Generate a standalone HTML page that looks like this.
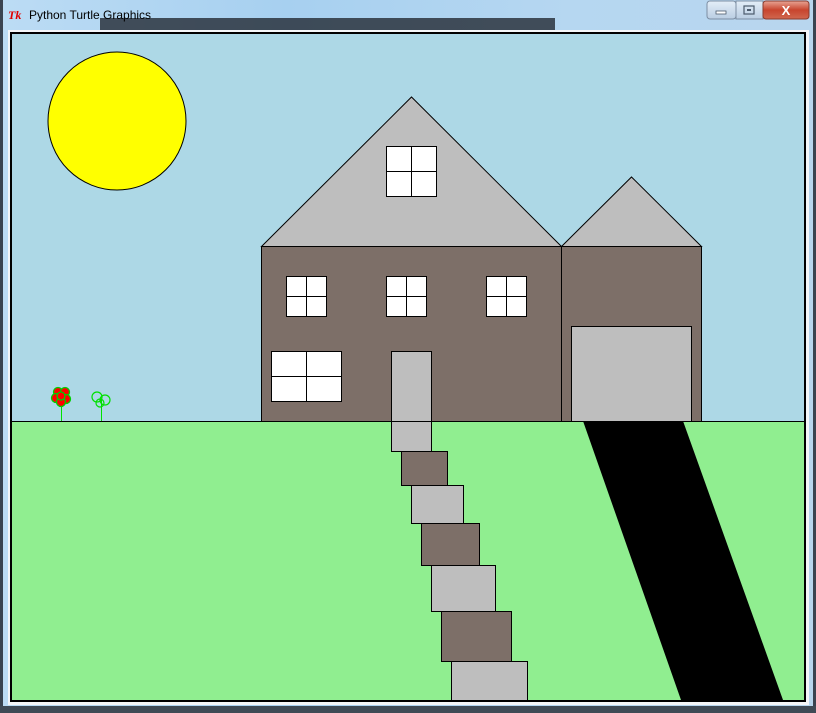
<!DOCTYPE html>
<html><head><meta charset="utf-8"><style>
html,body{margin:0;padding:0;width:816px;height:713px;overflow:hidden;background:#a9cbe6}
svg{display:block}
</style></head><body>
<svg width="816" height="713" xmlns="http://www.w3.org/2000/svg" font-family="Liberation Sans, sans-serif">
<defs>
<linearGradient id="tb" x1="0" y1="0" x2="1" y2="0">
<stop offset="0" stop-color="#bcdcf4"/><stop offset="0.35" stop-color="#a7d0f0"/><stop offset="0.7" stop-color="#b6d7f1"/><stop offset="1" stop-color="#b8d6ee"/>
</linearGradient>
<linearGradient id="cl" x1="0" y1="0" x2="0" y2="1">
<stop offset="0" stop-color="#e8a595"/><stop offset="0.5" stop-color="#c8452e"/><stop offset="1" stop-color="#d0674f"/>
</linearGradient>
<linearGradient id="bt" x1="0" y1="0" x2="0" y2="1">
<stop offset="0" stop-color="#e4eef8"/><stop offset="1" stop-color="#b9cde2"/>
</linearGradient>
<clipPath id="cv"><rect x="12" y="34" width="792" height="666"/></clipPath>
</defs>
<rect x="0" y="0" width="816" height="713" fill="url(#tb)"/>
<rect x="100" y="18" width="455" height="12" fill="#1a1e26" opacity="0.75"/>
<rect x="0" y="0" width="3" height="713" fill="#3a4450"/>
<rect x="813" y="0" width="3" height="713" fill="#3a4450"/>
<rect x="0" y="706" width="816" height="7" fill="#3f4a55"/>
<text x="8" y="19" font-size="12" font-style="italic" font-weight="bold" fill="#e00000" font-family="Liberation Serif, serif">Tk</text>
<text x="29" y="19" font-size="12" fill="#000">Python Turtle Graphics</text>
<rect x="707" y="1" width="29" height="18" rx="3" fill="url(#bt)" stroke="#7d8ea3"/>
<rect x="736" y="1" width="27" height="18" fill="url(#bt)" stroke="#7d8ea3"/>
<rect x="763" y="1" width="46" height="18" rx="3" fill="url(#cl)" stroke="#8a3b2e"/>
<rect x="716" y="11" width="10" height="3" fill="#fff" stroke="#4b5a6c" stroke-width="0.8"/>
<rect x="744" y="6" width="10" height="8" fill="none" stroke="#4b5a6c" stroke-width="1.2"/>
<rect x="747" y="9" width="4" height="2" fill="#4b5a6c"/>
<text x="786" y="15" font-size="13" font-weight="bold" fill="#fff" text-anchor="middle">X</text>
<rect x="8" y="30" width="801" height="675" fill="#f4f6f8"/>
<rect x="10" y="32" width="796" height="670" fill="#000"/>
<rect x="12" y="34" width="792" height="666" fill="#add8e6"/>
<g clip-path="url(#cv)">
<rect x="12" y="421" width="792" height="279" fill="#90ee90"/>
<line x1="12" y1="421.5" x2="804" y2="421.5" stroke="#000"/>
<circle cx="117" cy="121" r="69" fill="#ffff00" stroke="#000"/>
<g stroke="#000" stroke-width="1">
<polygon points="261.5,246.5 411.5,97 561.5,246.5" fill="#bebebe"/>
<rect x="261.5" y="246.5" width="300" height="175" fill="#7d6f68"/>
<polygon points="561.5,246.5 631.5,177 701.5,246.5" fill="#bebebe"/>
<rect x="561.5" y="246.5" width="140" height="175" fill="#7d6f68"/>
<rect x="571.5" y="326.5" width="120" height="95" fill="#bebebe"/>
<rect x="386.5" y="146.5" width="50" height="50" fill="#fff"/>
<path d="M411.5 146.5V196.5M386.5 171.5H436.5"/>
<rect x="286.5" y="276.5" width="40" height="40" fill="#fff"/>
<path d="M306.5 276.5V316.5M286.5 296.5H326.5"/>
<rect x="386.5" y="276.5" width="40" height="40" fill="#fff"/>
<path d="M406.5 276.5V316.5M386.5 296.5H426.5"/>
<rect x="486.5" y="276.5" width="40" height="40" fill="#fff"/>
<path d="M506.5 276.5V316.5M486.5 296.5H526.5"/>
<rect x="271.5" y="351.5" width="70" height="50" fill="#fff"/>
<path d="M306.5 351.5V401.5M271.5 376.5H341.5"/>
<rect x="391.5" y="351.5" width="40" height="70" fill="#bebebe"/>
<rect x="391.5" y="421.5" width="40" height="30" fill="#bebebe"/>
<rect x="401.5" y="451.5" width="46" height="34" fill="#7d6f68"/>
<rect x="411.5" y="485.5" width="52" height="38" fill="#bebebe"/>
<rect x="421.5" y="523.5" width="58" height="42" fill="#7d6f68"/>
<rect x="431.5" y="565.5" width="64" height="46" fill="#bebebe"/>
<rect x="441.5" y="611.5" width="70" height="50" fill="#7d6f68"/>
<rect x="451.5" y="661.5" width="76" height="60" fill="#bebebe"/>
</g>
<polygon points="583,421 683,421 783,700 681,700" fill="#000"/>
<line x1="61.5" y1="400" x2="61.5" y2="421" stroke="#00e000"/>
<line x1="101.5" y1="400" x2="101.5" y2="421" stroke="#00e000"/>
<g fill="#f00" stroke="#00d000" stroke-width="1.3">
<circle cx="58" cy="392" r="4.5"/><circle cx="65" cy="392" r="4.5"/><circle cx="56" cy="398" r="4.5"/><circle cx="66" cy="399" r="4.5"/><circle cx="61" cy="402" r="4.5"/><circle cx="61" cy="396" r="4"/>
</g>
<g fill="none" stroke="#00e000" stroke-width="1.2">
<circle cx="97" cy="397" r="5"/><circle cx="105" cy="400" r="5"/><circle cx="100" cy="403" r="4"/>
</g>
</g>
</svg>
</body></html>
